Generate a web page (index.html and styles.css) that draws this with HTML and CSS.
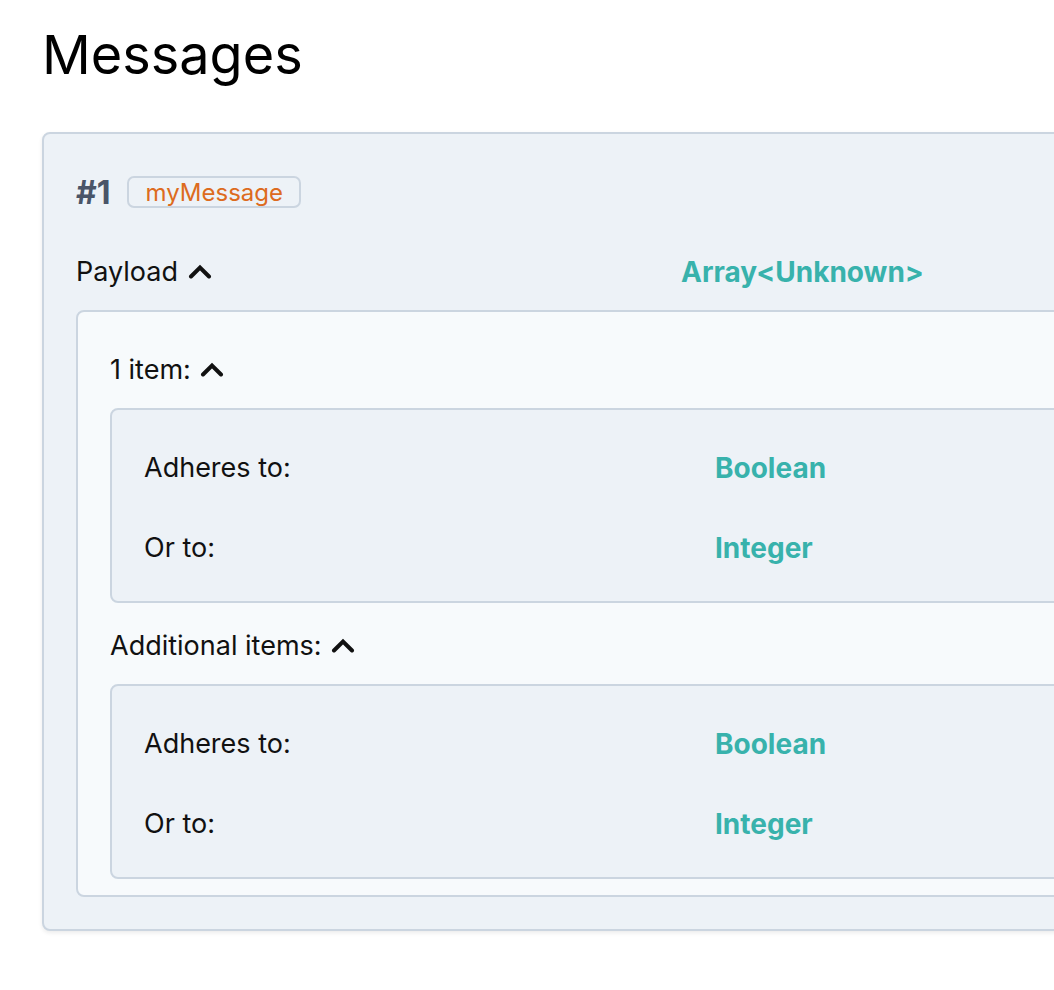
FILE: index.html
```html
<!DOCTYPE html>
<html>
<head>
<meta charset="utf-8">
<link rel="stylesheet" href="styles.css">
</head>
<body>
<h1 class="title">Messages</h1>
<div class="card">
  <div class="msg-head">
    <span class="msg-num">#1</span>
    <span class="badge">myMessage</span>
  </div>
  <div class="row row-top">
    <span class="label">Payload <svg class="chev" viewBox="0 0 24 16" width="24" height="16"><path d="M3 13.5 L12 4.5 L21 13.5"/></svg></span>
    <span class="type">Array&lt;Unknown&gt;</span>
  </div>
  <div class="box box-light">
    <div class="row">
      <span class="label">1 item: <svg class="chev" viewBox="0 0 24 16" width="24" height="16"><path d="M3 13.5 L12 4.5 L21 13.5"/></svg></span>
    </div>
    <div class="box box-gray">
      <div class="row row-inner">
        <span class="label">Adheres to:</span>
        <span class="type">Boolean</span>
      </div>
      <div class="row row-inner">
        <span class="label">Or to:</span>
        <span class="type">Integer</span>
      </div>
    </div>
    <div class="row row-after">
      <span class="label">Additional items: <svg class="chev" viewBox="0 0 24 16" width="24" height="16"><path d="M3 13.5 L12 4.5 L21 13.5"/></svg></span>
    </div>
    <div class="box box-gray">
      <div class="row row-inner">
        <span class="label">Adheres to:</span>
        <span class="type">Boolean</span>
      </div>
      <div class="row row-inner">
        <span class="label">Or to:</span>
        <span class="type">Integer</span>
      </div>
    </div>
  </div>
</div>
</body>
</html>
```
FILE: styles.css
```css
html, body {
  margin: 0;
  padding: 0;
  overflow: hidden;
  background: #ffffff;
}
body {
  font-family: Inter, "Noto Sans", "Liberation Sans", sans-serif;
  color: #111111;
  padding-left: 42px;
  width: 1300px;
}
.title {
  margin: 22px 0 44px 0;
  font-size: 54px;
  line-height: 66px;
  font-weight: 400;
  color: #000000;
}
.card {
  width: 1150px;
  background: #edf2f7;
  border: 2px solid #cbd5e0;
  border-radius: 8px;
  box-shadow: 0 2px 4px rgba(0, 0, 0, 0.08);
  padding: 32px 32px 32px 32px;
  margin-bottom: 40px;
}
.msg-head {
  display: flex;
  align-items: center;
  height: 52px;
  gap: 16px;
  margin-bottom: 28px;
}
.msg-num {
  font-size: 32px;
  font-weight: 700;
  color: #4a5568;
}
.badge {
  display: inline-flex;
  align-items: center;
  height: 28px;
  padding: 0 16px 0 17px;
  border: 2px solid #cbd5e0;
  border-radius: 7px;
  font-size: 24px;
  color: #dd6b20;
}
.row {
  display: grid;
  grid-template-columns: 571px auto;
  height: 52px;
  line-height: 52px;
  font-size: 27px;
  align-items: center;
}
.row-top {
  grid-template-columns: 605px auto;
  margin-bottom: 12px;
}
.label {
  display: inline-flex;
  align-items: center;
  white-space: pre;
}
.type {
  font-weight: 700;
  font-size: 28px;
  color: #38b2ac;
}
.chev {
  margin-left: 2px;
  margin-top: -3px;
}
.chev path {
  fill: none;
  stroke: #111111;
  stroke-width: 4;
  stroke-linecap: round;
  stroke-linejoin: miter;
}
.box {
  border: 2px solid #cbd5e0;
  border-radius: 8px;
}
.box-light {
  background: #f7fafc;
  padding: 32px 0 16px 32px;
}
.box-light > .row {
  margin-bottom: 12px;
}
.box-gray {
  background: #edf2f7;
  padding: 32px 0 27px 32px;
}
.row-inner + .row-inner {
  margin-top: 28px;
}
.box-light > .row-after {
  margin-top: 17px;
}
```
